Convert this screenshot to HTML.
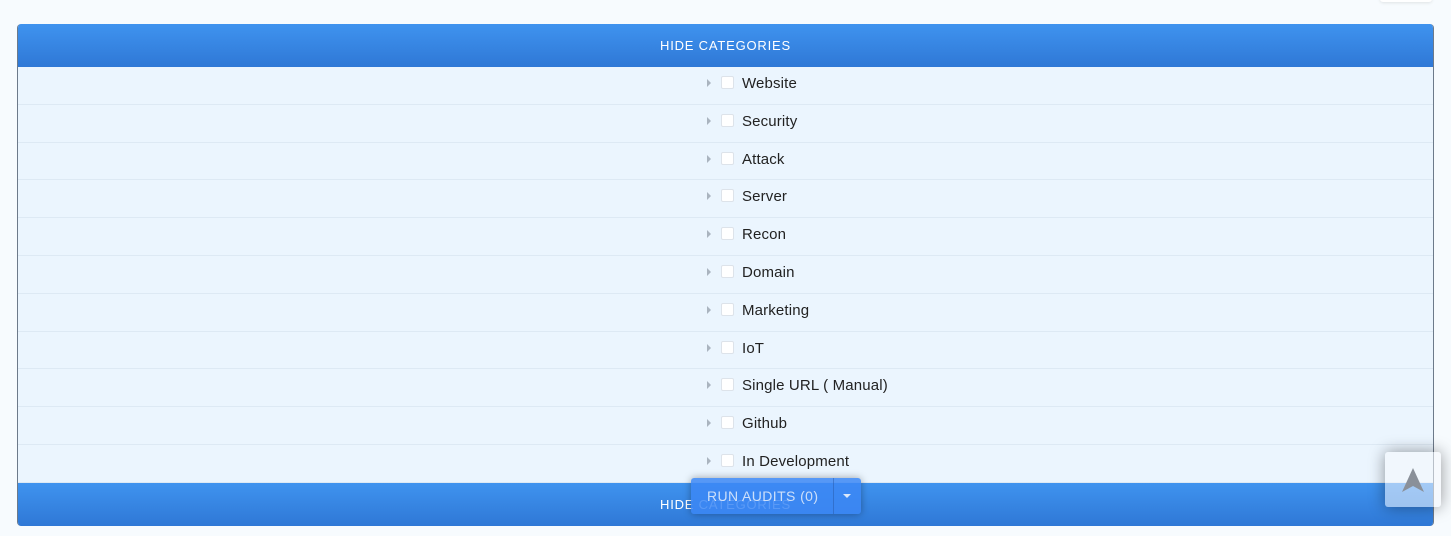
<!DOCTYPE html>
<html><head><style>
body{margin:0;width:1451px;height:536px;background:#f7fbfe;font-family:"Liberation Sans",sans-serif;position:relative;overflow:hidden}
.top{position:absolute;left:1380px;top:-6px;width:52px;height:8px;background:#fff;box-shadow:0 1px 3px rgba(0,0,0,.1);border-radius:3px}
.panel{position:absolute;left:17px;top:24px;width:1415px;height:502px;border:1px solid #6d7a8a;border-top:none;border-bottom:none;border-radius:4px;background:#ebf5fe;overflow:hidden}
.hdr{height:43px;background:linear-gradient(#3f93ef,#2f78d6);color:#fff;font-size:13px;letter-spacing:.8px;text-align:center;line-height:43px}
.row{height:37.8px;box-sizing:border-box;border-bottom:1px solid #dde9f4;position:relative}
.row:last-of-type{border-bottom:none}
.row .a{position:absolute;left:689px;top:12px;width:0;height:0;border-left:4px solid #aab4bf;border-top:4px solid transparent;border-bottom:4px solid transparent}
.row .c{position:absolute;left:703px;top:9px;width:11px;height:11px;background:#fff;border:1px solid #dde3ea;border-radius:2px}
.row .t{position:absolute;left:724px;top:8px;font-size:15px;letter-spacing:.15px;color:#222}
.btn{position:absolute;left:691px;top:478px;width:170px;height:36px;background:rgba(60,135,245,.85);border-radius:3px;box-shadow:0 0 8px rgba(0,0,0,.35);color:rgba(230,238,250,.85);font-size:14px;letter-spacing:.4px;line-height:36px}
.btn span{position:absolute;left:16px}
.btn .d{position:absolute;left:142px;top:0;width:1px;height:36px;background:rgba(40,90,170,.5)}
.btn .car{position:absolute;left:152px;top:16px;border-top:4px solid #dce8fa;border-left:4px solid transparent;border-right:4px solid transparent}
.up{position:absolute;left:1385px;top:452px;width:56px;height:55px;background:rgba(245,248,252,.55);border-radius:3px;box-shadow:0 0 16px rgba(0,0,0,.4)}
</style></head><body>
<div class="top"></div>
<div class="panel">
<div class="hdr">HIDE CATEGORIES</div>
<div class="row"><i class="a"></i><i class="c"></i><span class="t">Website</span></div>
<div class="row"><i class="a"></i><i class="c"></i><span class="t">Security</span></div>
<div class="row"><i class="a"></i><i class="c"></i><span class="t">Attack</span></div>
<div class="row"><i class="a"></i><i class="c"></i><span class="t">Server</span></div>
<div class="row"><i class="a"></i><i class="c"></i><span class="t">Recon</span></div>
<div class="row"><i class="a"></i><i class="c"></i><span class="t">Domain</span></div>
<div class="row"><i class="a"></i><i class="c"></i><span class="t">Marketing</span></div>
<div class="row"><i class="a"></i><i class="c"></i><span class="t">IoT</span></div>
<div class="row"><i class="a"></i><i class="c"></i><span class="t">Single URL ( Manual)</span></div>
<div class="row"><i class="a"></i><i class="c"></i><span class="t">Github</span></div>
<div class="row"><i class="a"></i><i class="c"></i><span class="t">In Development</span></div>
<div class="hdr">HIDE CATEGORIES</div>
</div>
<div class="btn"><span>RUN AUDITS (0)</span><i class="d"></i><i class="car"></i></div>
<div class="up"><svg width="56" height="55" viewBox="0 0 56 55"><path d="M28 16 L39 40 L28 34 L17 40 Z" fill="#8a9099"/></svg></div>
</body></html>
